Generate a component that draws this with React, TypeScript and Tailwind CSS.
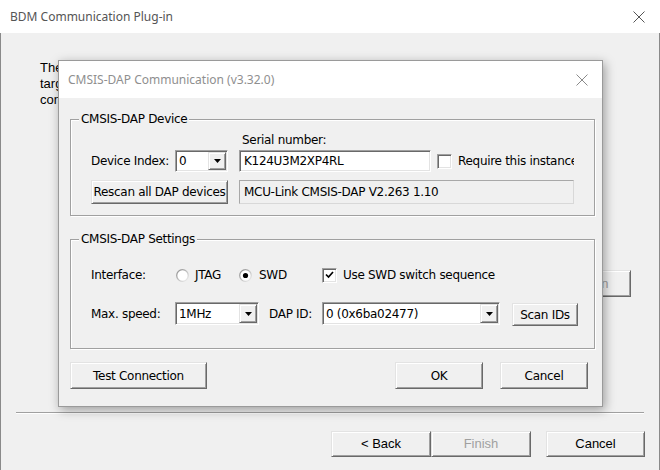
import React from 'react';

// classic win32 3D edges
const raised =
    'border border-t-[#e3e3e3] border-l-[#e3e3e3] border-r-[#696969] border-b-[#696969] shadow-[inset_1px_1px_0_#ffffff,inset_-1px_-1px_0_#a0a0a0] bg-[#f0f0f0]';
const sunken =
    'border border-t-[#a0a0a0] border-l-[#a0a0a0] border-r-white border-b-white shadow-[inset_1px_1px_0_#696969,inset_-1px_-1px_0_#e3e3e3] bg-white';

function Btn({ label, className, disabled }: { label: string; className: string; disabled?: boolean }) {
    return (
        <div className={`${raised} flex items-center justify-center whitespace-nowrap ${disabled ? 'text-[#a0a0a0]' : 'text-black'} ${className}`}>
            {label}
        </div>
    );
}

function Arrow() {
    return (
        <svg width="7" height="4" viewBox="0 0 7 4">
            <polygon points="0,0 7,0 3.5,4" fill="#000" />
        </svg>
    );
}

function Combo({ value, className }: { value: string; className: string }) {
    return (
        <div className={`${sunken} flex p-[1px] ${className}`}>
            <div className="flex flex-1 items-center overflow-hidden whitespace-nowrap pl-[2px]">{value}</div>
            <div className={`${raised} flex w-[18px] items-center justify-center`}>
                <Arrow />
            </div>
        </div>
    );
}

function Check({ checked }: { checked?: boolean }) {
    return (
        <div className={`${sunken} flex h-[15px] w-[15px] shrink-0 items-center justify-center`}>
            {checked && (
                <svg width="9" height="8" viewBox="0 0 9 8">
                    <polyline points="1,3.5 3.5,6 8,1" fill="none" stroke="#000" strokeWidth="1.7" />
                </svg>
            )}
        </div>
    );
}

function Radio({ selected }: { selected?: boolean }) {
    return (
        <svg width="13" height="13" viewBox="0 0 13 13" className="shrink-0">
            <defs>
                <linearGradient id="rg" x1="0" y1="0" x2="1" y2="1">
                    <stop offset="0" stopColor="#8a8a8a" />
                    <stop offset="1" stopColor="#f2f2f2" />
                </linearGradient>
            </defs>
            <circle cx="6.5" cy="6.5" r="5.8" fill="#fff" stroke="url(#rg)" strokeWidth="1.3" />
            {selected && <circle cx="6.5" cy="6.5" r="2.6" fill="#000" />}
        </svg>
    );
}

function Group({ title, className, children }: { title: string; className: string; children: React.ReactNode }) {
    return (
        <div className={`relative border border-[#a0a0a0] shadow-[inset_1px_1px_0_#ffffff,1px_1px_0_#ffffff] ${className}`}>
            <span className="absolute left-[8px] top-[-8px] bg-[#f0f0f0] px-[2px] leading-[14px]">{title}</span>
            {children}
        </div>
    );
}

function CloseX({ color }: { color: string }) {
    return (
        <svg width="12" height="12" viewBox="0 0 12 12">
            <path d="M0.5 0.5 L11.5 11.5 M11.5 0.5 L0.5 11.5" stroke={color} strokeWidth="1" />
        </svg>
    );
}

export default function App() {
    return (
        <div className="relative flex h-[470px] w-[660px] flex-col overflow-hidden bg-[#f0f0f0]">
            {/* wizard window */}
            <div className="flex h-[33px] items-center justify-between bg-white pl-[10px] pr-[15px] font-['Noto_Sans',sans-serif] text-[12px] text-[#555]">
                <span>BDM Communication Plug-in</span>
                <CloseX color="#555" />
            </div>
            <div className="flex flex-1 flex-col border-x border-[#8a8a8a] font-['Liberation_Sans',Arial,sans-serif] text-[13px]">
                <div className="pl-[39px] pt-[27px] leading-[16px] text-black">
                    <p className="whitespace-nowrap">The plug-in will now connect to the selected debug probe and to the</p>
                    <p className="whitespace-nowrap">target device. Check the probe settings below if the</p>
                    <p className="whitespace-nowrap">connection cannot be established.</p>
                </div>
                <div className="mt-[162px] flex justify-end pr-[28px]">
                    <Btn label="Test Connection" disabled className="h-[27px] w-[138px]" />
                </div>
                <div className="mx-[15px] mt-[115px] h-[2px] border-t border-b border-t-[#a0a0a0] border-b-white" />
                <div className="mt-[17px] flex justify-end pr-[14px]">
                    <Btn label="< Back" className="h-[26px] w-[100px]" />
                    <Btn label="Finish" disabled className="h-[26px] w-[100px]" />
                    <Btn label="Cancel" className="ml-[15px] h-[26px] w-[99px]" />
                </div>
            </div>

            {/* CMSIS-DAP dialog on top */}
            <div className="absolute left-[58px] top-[60px] flex h-[347px] w-[545px] flex-col border border-[#9a9a9a] bg-[#f0f0f0] shadow-[2px_3px_10px_rgba(0,0,0,0.35)]">
                <div className="flex h-[37px] items-center justify-between bg-white pl-[9px] pr-[14px] font-['Noto_Sans',sans-serif] text-[12px] text-[#8f8f8f]">
                    <span>CMSIS-DAP Communication (v3.32.0)</span>
                    <CloseX color="#8a8a8a" />
                </div>
                <div className="flex flex-1 flex-col pl-[11px] pr-[7px] pt-[21px] font-['DejaVu_Sans',sans-serif] text-[12px] tracking-[-0.3px] text-black">
                    <Group title="CMSIS-DAP Device" className="pl-[20px] pt-[13px] pb-[11px]">
                        <div className="flex h-[15px] items-center">
                            <span className="w-[148px]" />
                            <span className="pl-[3px] leading-[15px]">Serial number:</span>
                        </div>
                        <div className="mt-[2px] flex h-[22px] items-center">
                            <span className="w-[84px]">Device Index:</span>
                            <Combo value="0" className="h-full w-[53px]" />
                            <div className={`${sunken} ml-[11px] flex h-full w-[192px] items-center pl-[4px]`}>K124U3M2XP4RL</div>
                            <div className="ml-[6px]">
                                <Check />
                            </div>
                            <span className="ml-[6px] w-[116px] overflow-hidden whitespace-nowrap">Require this instance</span>
                        </div>
                        <div className="mt-[8px] flex h-[24px]">
                            <Btn label="Rescan all DAP devices" className="w-[137px]" />
                            <div className="ml-[11px] flex w-[335px] items-center border border-t-[#a8a8a8] border-l-[#a8a8a8] border-r-[#d8d8d8] border-b-[#d8d8d8] pl-[4px]">
                                MCU-Link CMSIS-DAP V2.263 1.10
                            </div>
                        </div>
                    </Group>

                    <Group title="CMSIS-DAP Settings" className="mt-[23px] pl-[20px] pt-[24px] pb-[23px]">
                        <div className="flex h-[22px] items-center">
                            <span className="w-[85px]">Interface:</span>
                            <div className="flex w-[63px] items-center gap-[6px]">
                                <Radio />
                                <span>JTAG</span>
                            </div>
                            <div className="flex w-[83px] items-center gap-[7px]">
                                <Radio selected />
                                <span>SWD</span>
                            </div>
                            <Check checked />
                            <span className="ml-[6px]">Use SWD switch sequence</span>
                        </div>
                        <div className="mt-[16px] flex h-[23px] items-center">
                            <span className="w-[84px]">Max. speed:</span>
                            <Combo value="1MHz" className="h-full w-[84px]" />
                            <span className="ml-[10px] w-[53px]">DAP ID:</span>
                            <Combo value="0 (0x6ba02477)" className="h-full w-[178px]" />
                            <Btn label="Scan IDs" className="ml-[12px] mt-[2px] h-[23px] w-[66px]" />
                        </div>
                    </Group>

                    <div className="mt-[13px] flex h-[27px] pr-[7px]">
                        <Btn label="Test Connection" className="w-[137px]" />
                        <Btn label="OK" className="ml-auto w-[88px]" />
                        <Btn label="Cancel" className="ml-[17px] w-[88px]" />
                    </div>
                </div>
            </div>
        </div>
    );
}
